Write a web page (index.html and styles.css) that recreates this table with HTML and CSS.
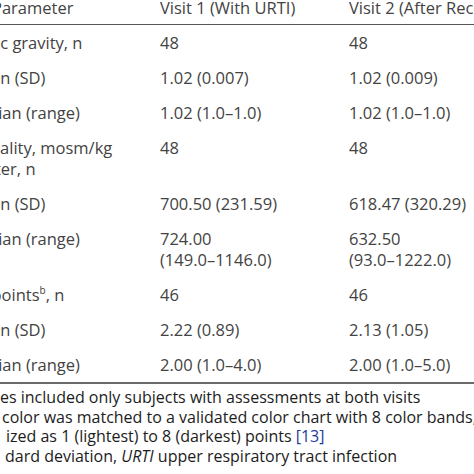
FILE: index.html
```html
<!DOCTYPE html>
<html>
<head>
<meta charset="utf-8">
<link rel="stylesheet" href="styles.css">
</head>
<body>
<div class="page">
  <table class="data">
    <thead>
      <tr>
        <th class="c1"><span class="head-lab">Parameter</span></th>
        <th class="c2">Visit 1 (With URTI)</th>
        <th class="c3">Visit 2 (After Recovery)</th>
      </tr>
    </thead>
    <tbody>
      <tr>
        <td class="c1">Specific gravity, n</td>
        <td class="c2">48</td>
        <td class="c3">48</td>
      </tr>
      <tr>
        <td class="c1 sub">Mean (SD)</td>
        <td class="c2">1.02 (0.007)</td>
        <td class="c3">1.02 (0.009)</td>
      </tr>
      <tr>
        <td class="c1 sub med">Median (range)</td>
        <td class="c2">1.02 (1.0–1.0)</td>
        <td class="c3">1.02 (1.0–1.0)</td>
      </tr>
      <tr>
        <td class="c1"><span class="ln">Osmolality, mosm/kg</span><span class="ln cont">water, n</span></td>
        <td class="c2">48</td>
        <td class="c3">48</td>
      </tr>
      <tr>
        <td class="c1 sub">Mean (SD)</td>
        <td class="c2">700.50 (231.59)</td>
        <td class="c3">618.47 (320.29)</td>
      </tr>
      <tr>
        <td class="c1 sub med">Median (range)</td>
        <td class="c2"><span class="ln">724.00</span><span class="ln">(149.0–1146.0)</span></td>
        <td class="c3"><span class="ln">632.50</span><span class="ln">(93.0–1222.0)</span></td>
      </tr>
      <tr>
        <td class="c1"><span class="shift">Color points<sup>b</sup>, n</span></td>
        <td class="c2">46</td>
        <td class="c3">46</td>
      </tr>
      <tr>
        <td class="c1 sub">Mean (SD)</td>
        <td class="c2">2.22 (0.89)</td>
        <td class="c3">2.13 (1.05)</td>
      </tr>
      <tr>
        <td class="c1 sub med">Median (range)</td>
        <td class="c2">2.00 (1.0–4.0)</td>
        <td class="c3">2.00 (1.0–5.0)</td>
      </tr>
    </tbody>
  </table>
  <div class="notes">
    <p class="note n1">es included only subjects with assessments at both visits</p>
    <p class="note n2">color was matched to a validated color chart with 8 color bands, categorized</p>
    <p class="note n3">ized as 1 (lightest) to 8 (darkest) points <a class="ref">[13]</a></p>
    <p class="note n4">dard deviation, <i>URTI</i> upper respiratory tract infection</p>
  </div>
</div>
</body>
</html>
```

FILE: styles.css
```css
html, body {
  margin: 0;
  padding: 0;
  background: #ffffff;
  overflow: hidden;
}

.page {
  width: 474px;
  height: 474px;
  overflow: hidden;
  font-family: "Open Sans", "Liberation Sans", sans-serif;
}

.data {
  border-collapse: collapse;
  margin-left: -50px;
  table-layout: fixed;
  width: 760px;
  font-size: 16.5px;
  color: #434343;
}

.data th,
.data td {
  padding: 7px 0;
  line-height: 21px;
  text-align: left;
  vertical-align: top;
  font-weight: 400;
  white-space: nowrap;
}

.data th {
  padding: 0 0 8px 0;
  line-height: 16px;
  border-bottom: 1.5px solid #555555;
}

.c1 { width: 210px; }
.c2 { width: 189px; }
.c3 { width: 361px; }

.head-lab {
  padding-left: 42px;
}

.data .sub {
  padding-left: 17px;
}

.data .med {
  padding-left: 14px;
}

.ln {
  display: block;
}

.cont {
  padding-left: 23px;
}

.shift {
  margin-left: -4px;
}

.data sup {
  font-size: 10px;
  line-height: 0;
  vertical-align: 7px;
}

.data tbody tr:last-child td {
  border-bottom: 2px solid #6a6a6a;
}

.notes {
  padding-top: 4px;
  color: #1c1c1c;
  font-size: 16px;
  font-weight: 500;
}

.note {
  margin: 0;
  line-height: 19.5px;
  white-space: nowrap;
}

.n2 { padding-left: 2px; }
.n3 { padding-left: 6px; }
.n4 { padding-left: 5px; }

.ref {
  color: #23399a;
  text-decoration: none;
}
```
